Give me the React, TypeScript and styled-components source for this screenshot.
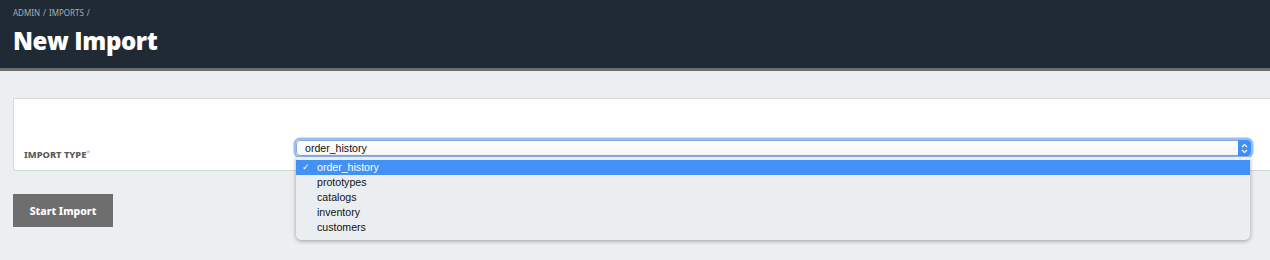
import React from 'react';
import styled, { createGlobalStyle } from 'styled-components';

const Global = createGlobalStyle`
  html {
    overflow: hidden;
  }
  body {
    margin: 0;
    padding: 0;
    min-height: 100vh;
    background: #eceff0;
    font-family: "Open Sans", "Liberation Sans", sans-serif;
  }
`;

const Header = styled.header`
  background: #1f2a35;
  height: 68px;
  border-bottom: 3px solid #6f6f6f;
  padding: 0 13px;
`;

const Crumbs = styled.div`
  padding-top: 7px;
  font-size: 8px;
  color: #a7b0b8;
  text-transform: uppercase;
  line-height: 12px;
  font-family: "Noto Sans", sans-serif;
  span { margin: 0 3px; }
`;

const Title = styled.h1`
  margin: 7px 0 0;
  font-size: 24px;
  line-height: 30px;
  font-weight: 800;
  color: #ffffff;
  letter-spacing: -0.4px;
`;

const Main = styled.main`
  padding: 27px 0 0 13px;
  display: flex;
  flex-direction: column;
  align-items: flex-start;
`;

const Card = styled.section`
  align-self: stretch;
  background: #fff;
  border: 1px solid #d3d7d9;
  border-right: none;
  height: 73px;
  display: grid;
  grid-template-columns: 272px 955px;
  align-items: end;
  padding: 0 0 14px 10px;
  box-sizing: border-box;
`;

const Label = styled.label`
  font-size: 9.3px;
  font-weight: 800;
  color: #555b60;
  font-family: "Noto Sans", sans-serif;
  margin-bottom: -5px;
  sup { color: #a9aeb2; font-size: 7px; vertical-align: 3px; font-weight: 400; }
`;

const SelectWrap = styled.div`
  position: relative;
`;

const SelectBox = styled.div`
  height: 16px;
  box-sizing: border-box;
  background: linear-gradient(#ffffff, #f7f7f7);
  border: 1px solid #8fa9c8;
  border-radius: 4px;
  box-shadow: 0 0 0 2.5px #94bff4;
  font-size: 10.6px;
  line-height: 14px;
  color: #111;
  padding-left: 8px;
  font-family: "Liberation Sans", sans-serif;
  display: flex;
  justify-content: space-between;
`;

const Stepper = styled.div`
  margin: -1px -1px -1px 0;
  width: 13px;
  height: 16px;
  background: #3f8ff6;
  border-radius: 0 4px 4px 0;
  display: flex;
  align-items: center;
  justify-content: center;
`;

const Menu = styled.ul`
  position: absolute;
  top: 17px;
  left: 0;
  width: 954px;
  margin: 0;
  padding: 3px 0 5px;
  list-style: none;
  background: #ebeef1;
  border-radius: 0 0 5px 5px;
  box-shadow: 0 1px 4px rgba(0, 0, 0, 0.35);
  font-family: "Liberation Sans", sans-serif;
  font-size: 10.6px;
  z-index: 5;
`;

const Item = styled.li<{ $active?: boolean }>`
  height: 15px;
  line-height: 15px;
  display: flex;
  background: ${p => (p.$active ? '#4291f7' : 'transparent')};
  color: ${p => (p.$active ? '#fff' : '#111')};
`;

const Check = styled.span`
  width: 21px;
  padding-left: 6px;
  box-sizing: border-box;
  font-size: 9px;
`;

const Button = styled.button`
  margin-top: 23px;
  width: 100px;
  height: 33px;
  border: none;
  background: #6e6e6e;
  color: #fff;
  font-family: "Noto Sans", sans-serif;
  font-weight: 800;
  font-size: 10.5px;
  cursor: pointer;
`;

const options = ['order_history', 'prototypes', 'catalogs', 'inventory', 'customers'];

export default function App() {
  return (
    <>
      <Global />
      <Header>
        <Crumbs>Admin<span>/</span>Imports<span>/</span></Crumbs>
        <Title>New Import</Title>
      </Header>
      <Main>
        <Card>
          <Label>IMPORT TYPE<sup>*</sup></Label>
          <SelectWrap>
            <SelectBox>
              order_history
              <Stepper>
                <svg width="7" height="11" viewBox="0 0 7 11">
                  <path d="M1 4 L3.5 1.5 L6 4 M1 7 L3.5 9.5 L6 7" fill="none" stroke="#fff" strokeWidth="1.1" />
                </svg>
              </Stepper>
            </SelectBox>
            <Menu>
              {options.map((o, i) => (
                <Item key={o} $active={i === 0}>
                  <Check>{i === 0 ? '✓' : ''}</Check>
                  {o}
                </Item>
              ))}
            </Menu>
          </SelectWrap>
        </Card>
        <Button>Start Import</Button>
      </Main>
    </>
  );
}
